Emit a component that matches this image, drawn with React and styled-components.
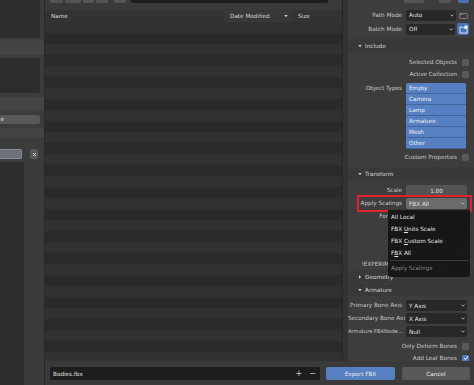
import React from "react";
import styled, { createGlobalStyle } from "styled-components";

const GlobalStyle = createGlobalStyle`
  html, body {
    margin: 0;
    padding: 0;
    background: #303030;
  }
  body {
    font-family: "DejaVu Sans", "Noto Sans", sans-serif;
    font-size: 5.7px;
    color: #d0d0d0;
  }
`;

const Window = styled.div`
  position: relative;
  width: 474px;
  height: 385px;
  display: flex;
  overflow: hidden;
  background: #3a3a3a;
`;

/* ---------- left sidebar ---------- */

const Sidebar = styled.div`
  width: 44px;
  flex-shrink: 0;
  display: flex;
  flex-direction: column;
  background: #3c3c3c;
  border-right: 1px solid #2a2a2a;
`;

const ListBox = styled.div`
  width: 40px;
  height: ${(p) => p.$h}px;
  margin-top: ${(p) => p.$mt || 0}px;
  flex-shrink: 0;
  background: #2d2d2d;
  border-radius: 0 2px 2px 0;
`;

const SideHeader = styled.div`
  height: ${(p) => p.$h}px;
  margin-top: ${(p) => p.$mt || 0}px;
  flex-shrink: 0;
  background: #444444;
`;

const SideField = styled.div`
  width: 40px;
  height: 9px;
  margin-top: ${(p) => p.$mt || 0}px;
  flex-shrink: 0;
  background: #595959;
  border-radius: 0 2px 2px 0;
  color: #e0e0e0;
  line-height: 9px;
  overflow: hidden;
  text-align: right;
  padding-right: 36px;
  box-sizing: border-box;
`;

const FilterRow = styled.div`
  display: flex;
  align-items: center;
  gap: 8px;
  height: 12px;
  margin-top: 10px;
  flex-shrink: 0;
`;

const FilterInput = styled.div`
  width: 22px;
  height: 10px;
  background: #6c707c;
  border: 1px solid #8a8d96;
  border-left: none;
  box-sizing: border-box;
  border-radius: 0 2px 2px 0;
`;

const ClearButton = styled.div`
  width: 8px;
  height: 10px;
  background: #575757;
  border-radius: 2px;
  display: flex;
  align-items: center;
  justify-content: center;
`;

const SideLower = styled.div`
  flex: 1;
  display: flex;
  margin-top: 2px;
`;

const SideColumn = styled.div`
  width: ${(p) => p.$w}px;
  background: ${(p) => p.$bg};
`;

/* ---------- main column ---------- */

const Main = styled.div`
  flex: 1;
  min-width: 0;
  display: flex;
  flex-direction: column;
`;

const Upper = styled.div`
  height: 361px;
  flex-shrink: 0;
  display: flex;
  overflow: hidden;
`;

const Browser = styled.div`
  width: 297px;
  flex-shrink: 0;
  display: flex;
  flex-direction: column;
  background: #2b2b2b;
  border-right: 1px solid #262626;
`;

const Toolbar = styled.div`
  height: 10px;
  flex-shrink: 0;
  display: flex;
  align-items: flex-start;
  gap: 2px;
  padding-left: 5px;
  background: #3a3a3a;
`;

const ToolButton = styled.div`
  width: ${(p) => p.$w}px;
  height: 3px;
  flex-shrink: 0;
  margin-left: ${(p) => p.$ml || 0}px;
  background: ${(p) => (p.$dark ? "#1e1e1e" : p.$blue ? "#4772b3" : "#555555")};
  border-radius: 0 0 2px 2px;
`;

const ColumnHeader = styled.div`
  height: 12px;
  flex-shrink: 0;
  display: flex;
  align-items: center;
  padding-right: 30px;
  background: #333333;
  color: #d6d6d6;
`;

const HeaderCell = styled.div`
  width: ${(p) => (p.$w ? `${p.$w}px` : "auto")};
  flex: ${(p) => (p.$w ? "none" : 1)};
  height: 12px;
  display: flex;
  align-items: center;
  justify-content: space-between;
  padding: 0 4px 0 ${(p) => p.$pl ?? 6}px;
  box-sizing: border-box;
  background: ${(p) => (p.$hl ? "#383838" : "transparent")};
  margin-right: ${(p) => p.$mr || 0}px;
`;

const FileRows = styled.div`
  flex: 1;
  overflow: hidden;
`;

const FileRow = styled.div`
  height: 11px;
  background: ${(p) => (p.$odd ? "#2a2a2a" : "#313131")};
`;

const Properties = styled.div`
  flex: 1;
  min-width: 0;
  display: flex;
  flex-direction: column;
  padding-left: 5px;
  background: #333333;
  overflow: hidden;
`;

const TopStrip = styled.div`
  height: 8px;
  flex-shrink: 0;
  display: flex;
  align-items: flex-start;
  background: #3d3d3d;
`;

const Body = styled.div`
  flex: 1;
  display: flex;
  flex-direction: column;
  background: #3d3d3d;
`;

const PropRow = styled.div`
  height: ${(p) => p.$h || 13}px;
  margin-top: ${(p) => p.$mt || 0}px;
  display: flex;
  align-items: ${(p) => (p.$top ? "flex-start" : "center")};
  flex-shrink: 0;
`;

const Label = styled.div`
  width: 58px;
  flex-shrink: 0;
  padding-right: 4px;
  box-sizing: border-box;
  text-align: right;
  white-space: nowrap;
  overflow: hidden;
  font-size: ${(p) => p.$fs || 5.7}px;
  color: #c9c9c9;
  line-height: 11px;
`;

const Select = styled.div`
  width: ${(p) => p.$w || 61}px;
  height: 11px;
  flex-shrink: 0;
  display: flex;
  align-items: center;
  justify-content: space-between;
  padding: 0 2px 0 3px;
  box-sizing: border-box;
  border-radius: 2px;
  background: ${(p) => (p.$active ? "#6b6b6b" : "#282828")};
  color: #e2e2e2;
`;

const NumField = styled.div`
  width: 61px;
  height: 11px;
  border-radius: 2px;
  background: #545454;
  color: #e6e6e6;
  display: flex;
  align-items: center;
  justify-content: center;
`;

const IconButton = styled.div`
  width: ${(p) => p.$w}px;
  height: ${(p) => p.$h}px;
  margin-left: 2px;
  border-radius: 2px;
  background: ${(p) => (p.$blue ? "#4772b3" : "transparent")};
  display: flex;
  align-items: center;
  justify-content: center;
`;

const PanelHeader = styled.div`
  height: ${(p) => p.$h || 14}px;
  margin-top: ${(p) => p.$mt || 0}px;
  flex-shrink: 0;
  display: flex;
  align-items: center;
  gap: 3px;
  padding-left: 10px;
  background: #393939;
  color: #d6d6d6;
`;

const CheckRow = styled.div`
  height: ${(p) => p.$h || 12}px;
  margin-top: ${(p) => p.$mt || 0}px;
  flex-shrink: 0;
  display: flex;
  align-items: center;
  justify-content: flex-end;
  gap: 5px;
  padding-right: 5px;
  color: #c9c9c9;
  white-space: nowrap;
`;

const Check = styled.div`
  width: 7px;
  height: 7px;
  flex-shrink: 0;
  border-radius: 1.5px;
  background: ${(p) => (p.$on ? "#4f7cc4" : "#595959")};
  display: flex;
  align-items: center;
  justify-content: center;
`;

const EnumList = styled.div`
  width: 60px;
  display: flex;
  flex-direction: column;
  border-radius: 2px;
  overflow: hidden;
`;

const EnumItem = styled.div`
  height: 11px;
  box-sizing: border-box;
  padding-left: 3px;
  line-height: 11px;
  background: #5680c2;
  border-bottom: 1px solid #41649c;
  color: #f2f2f2;
`;

/* ---------- bottom bar ---------- */

const BottomBar = styled.div`
  flex: 1;
  display: flex;
  align-items: flex-start;
  gap: 6px;
  padding: 6px 0 0 5px;
  background: #3a3a3a;
`;

const FileName = styled.div`
  width: 270px;
  height: 13px;
  display: flex;
  align-items: center;
  gap: 7px;
  padding: 0 4px 0 3px;
  box-sizing: border-box;
  border-radius: 2px;
  background: #1d1d1d;
  color: #e2e2e2;
`;

const Spacer = styled.div`
  flex: 1;
`;

const Sign = styled.span`
  font-size: 8px;
  color: #cfcfcf;
`;

const Button = styled.div`
  width: ${(p) => p.$w}px;
  height: 13px;
  margin-left: ${(p) => p.$ml || 0}px;
  border-radius: 2px;
  display: flex;
  align-items: center;
  justify-content: center;
  background: ${(p) => (p.$primary ? "#5680c2" : "#585858")};
  color: #eeeeee;
`;

/* ---------- overlays ---------- */

const Highlight = styled.div`
  position: absolute;
  left: 357px;
  top: 195px;
  width: 115px;
  height: 17px;
  box-sizing: border-box;
  border: 2px solid #e3212d;
`;

const Menu = styled.div`
  position: absolute;
  left: 388px;
  top: 210px;
  width: 82px;
  height: 67px;
  padding-top: 1px;
  box-sizing: border-box;
  border-radius: 0 0 3px 3px;
  background: rgba(22, 22, 22, 0.97);
`;

const MenuItem = styled.div`
  height: 12px;
  line-height: 12px;
  padding-left: 3px;
  white-space: nowrap;
  color: ${(p) => (p.$title ? "#8a8a8a" : "#e4e4e4")};
`;

const MenuSep = styled.div`
  height: 1px;
  margin: 1px 2px;
  background: #3a3a3a;
`;

const Key = styled.span`
  text-decoration: underline;
`;

/* ---------- icons ---------- */

const Chevron = () => (
  <svg width="4" height="3" viewBox="0 0 4 3">
    <path d="M0.5 0.6 L2 2.2 L3.5 0.6" fill="none" stroke="#c8c8c8" strokeWidth="0.8" />
  </svg>
);

const Tri = ({ open }) => (
  <svg width="4" height="4" viewBox="0 0 4 4">
    {open ? <path d="M0.3 1 L3.7 1 L2 3.2 Z" fill="#cfcfcf" /> : <path d="M1 0.3 L3.2 2 L1 3.7 Z" fill="#cfcfcf" />}
  </svg>
);

const Tick = () => (
  <svg width="6" height="6" viewBox="0 0 6 6">
    <path d="M1 3.2 L2.5 4.6 L5 1.4" fill="none" stroke="#ffffff" strokeWidth="1" />
  </svg>
);

const Cross = () => (
  <svg width="5" height="5" viewBox="0 0 5 5">
    <path d="M1 1 L4 4 M4 1 L1 4" stroke="#d8d8d8" strokeWidth="0.9" />
  </svg>
);

const PathIcon = () => (
  <svg width="9" height="7" viewBox="0 0 9 7">
    <rect x="0.5" y="1.5" width="8" height="5" rx="1" fill="none" stroke="#8a8a8a" strokeWidth="0.8" />
    <path d="M0.5 2.5 L3.5 2.5 L4.5 1.5" fill="none" stroke="#8a8a8a" strokeWidth="0.8" />
  </svg>
);

const BatchIcon = () => (
  <svg width="9" height="9" viewBox="0 0 9 9">
    <path d="M1 3 L1 8 L8 8 L8 3 L4.5 3 L3.5 2 L1 2 Z" fill="none" stroke="#ffffff" strokeWidth="0.8" />
    <rect x="5.5" y="0.5" width="3" height="3" fill="#ffffff" />
  </svg>
);

const rows = Array.from({ length: 32 }, (_, i) => i);

function App() {
  return (
    <>
      <GlobalStyle />
      <Window>
        <Sidebar>
          <ListBox $h={38} />
          <SideHeader $h={15} $mt={2} />
          <ListBox $h={35} $mt={3} />
          <SideHeader $h={13} $mt={4} />
          <SideField $mt={5}>e</SideField>
          <SideHeader $h={10} $mt={4} />
          <FilterRow>
            <FilterInput />
            <ClearButton>
              <Cross />
            </ClearButton>
          </FilterRow>
          <SideLower>
            <SideColumn $w={24} $bg="#2d2d2d" />
            <SideColumn $w={20} $bg="#3b3b3b" />
          </SideLower>
        </Sidebar>

        <Main>
          <Upper>
            <Browser>
              <Toolbar>
                <ToolButton $w={13} />
                <ToolButton $w={16} />
                <ToolButton $w={11} />
                <ToolButton $w={12} />
                <ToolButton $w={12} $ml={4} />
                <ToolButton $w={197} $dark $ml={3} />
              </Toolbar>
              <ColumnHeader>
                <HeaderCell>Name</HeaderCell>
                <HeaderCell $w={68} $hl $mr={3}>
                  Date Modified
                  <Tri open />
                </HeaderCell>
                <HeaderCell $w={17} $pl={3}>
                  Size
                </HeaderCell>
              </ColumnHeader>
              <FileRows>
                {rows.map((i) => (
                  <FileRow key={i} $odd={i % 2 === 1} />
                ))}
              </FileRows>
            </Browser>

            <Properties>
              <TopStrip>
                <ToolButton $w={20} $ml={56} />
                <ToolButton $w={12} $ml={15} />
                <ToolButton $w={11} $ml={7} $blue />
              </TopStrip>
              <Body>
                <PropRow $h={14}>
                  <Label>Path Mode</Label>
                  <Select $w={50}>
                    Auto
                    <Chevron />
                  </Select>
                  <IconButton $w={10} $h={10}>
                    <PathIcon />
                  </IconButton>
                </PropRow>
                <PropRow $h={14}>
                  <Label>Batch Mode</Label>
                  <Select $w={49}>
                    Off
                    <Chevron />
                  </Select>
                  <IconButton $w={12} $h={12} $blue>
                    <BatchIcon />
                  </IconButton>
                </PropRow>

                <PanelHeader $h={15} $mt={2}>
                  <Tri open />
                  Include
                </PanelHeader>
                <CheckRow $mt={3}>
                  Selected Objects
                  <Check />
                </CheckRow>
                <CheckRow>
                  Active Collection
                  <Check />
                </CheckRow>
                <PropRow $h={66} $mt={3} $top>
                  <Label>Object Types</Label>
                  <EnumList>
                    {["Empty", "Camera", "Lamp", "Armature", "Mesh", "Other"].map((t) => (
                      <EnumItem key={t}>{t}</EnumItem>
                    ))}
                  </EnumList>
                </PropRow>
                <CheckRow $mt={2}>
                  Custom Properties
                  <Check />
                </CheckRow>

                <PanelHeader $mt={4}>
                  <Tri open />
                  Transform
                </PanelHeader>
                <PropRow $mt={3}>
                  <Label>Scale</Label>
                  <NumField>1.00</NumField>
                </PropRow>
                <PropRow>
                  <Label>Apply Scalings</Label>
                  <Select $active>
                    FBX All
                    <Chevron />
                  </Select>
                </PropRow>
                {/* rows below lie under the open menu; only their left edge shows */}
                <PropRow>
                  <Label>Forward</Label>
                  <Select />
                </PropRow>
                <PropRow>
                  <Label />
                  <Select />
                </PropRow>
                <CheckRow $h={11}>
                  <Check $on />
                </CheckRow>
                <CheckRow $h={11}>
                  <Check $on />
                </CheckRow>
                <CheckRow $h={11}>
                  !EXPERIMENTAL! Apply Transform
                  <Check />
                </CheckRow>

                <PanelHeader $h={13} $mt={1}>
                  <Tri />
                  Geometry
                </PanelHeader>
                <PanelHeader $h={12} $mt={1}>
                  <Tri open />
                  Armature
                </PanelHeader>
                <PropRow $mt={3}>
                  <Label>Primary Bone Axis</Label>
                  <Select>
                    Y Axis
                    <Chevron />
                  </Select>
                </PropRow>
                <PropRow>
                  <Label>Secondary Bone Axi</Label>
                  <Select>
                    X Axis
                    <Chevron />
                  </Select>
                </PropRow>
                <PropRow>
                  <Label $fs={5.2}>Armature FBXNode...</Label>
                  <Select>
                    Null
                    <Chevron />
                  </Select>
                </PropRow>
                <CheckRow $mt={2}>
                  Only Deform Bones
                  <Check />
                </CheckRow>
                <CheckRow>
                  Add Leaf Bones
                  <Check $on>
                    <Tick />
                  </Check>
                </CheckRow>
              </Body>
            </Properties>
          </Upper>

          <BottomBar>
            <FileName>
              Bodies.fbx
              <Spacer />
              <Sign>+</Sign>
              <Sign>−</Sign>
            </FileName>
            <Button $w={69} $primary>
              Export FBX
            </Button>
            <Button $w={68} $ml={1}>
              Cancel
            </Button>
          </BottomBar>
        </Main>

        <Highlight />
        <Menu>
          <MenuItem>All Local</MenuItem>
          <MenuItem>
            FBX <Key>U</Key>nits Scale
          </MenuItem>
          <MenuItem>
            FBX <Key>C</Key>ustom Scale
          </MenuItem>
          <MenuItem>
            F<Key>B</Key>X All
          </MenuItem>
          <MenuSep />
          <MenuItem $title>Apply Scalings</MenuItem>
        </Menu>
      </Window>
    </>
  );
}

export default App;
